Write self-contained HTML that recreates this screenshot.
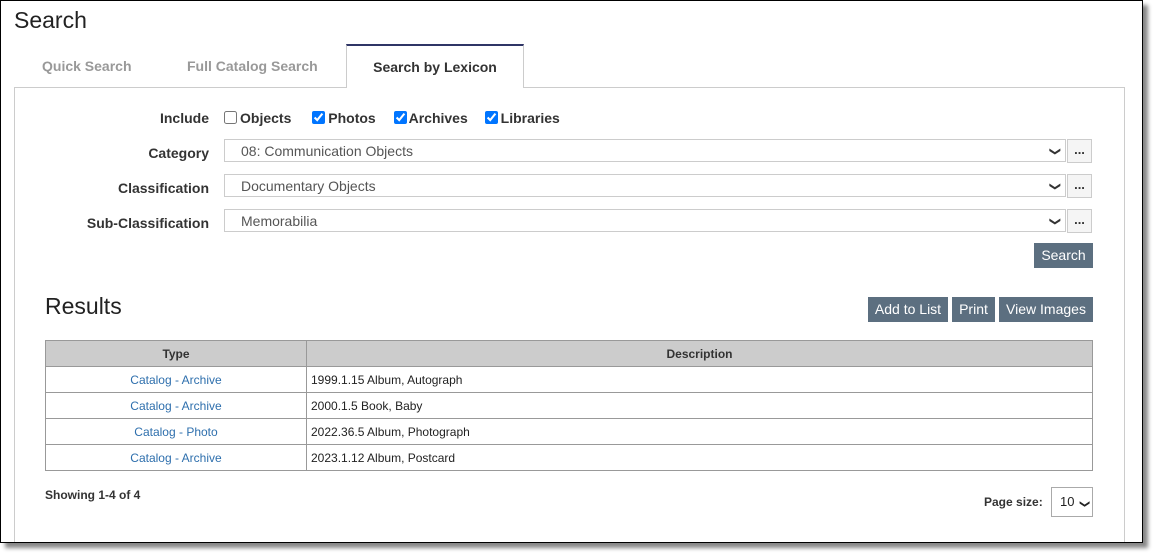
<!DOCTYPE html>
<html><head><style>
body{margin:0;width:1153px;height:558px;background:#fff;font-family:"Liberation Sans",Arial,sans-serif;position:relative;overflow:hidden}
.a{position:absolute}
.frame{left:0;top:0;width:1141px;height:541px;border:1px solid #000;box-shadow:5px 5px 4px #888;background:#fff}
.lbl{font-size:14px;font-weight:bold;color:#333;text-align:right;width:130px;left:79px}
.sel{left:224px;width:842px;height:23px;border:1px solid #ccc;font-size:14px;color:#555;line-height:23px;box-sizing:border-box;padding-left:16px}
.chev{position:absolute;right:6px;top:0;font-size:11px;color:#333;display:inline-block;transform:rotate(90deg)}
.dots{left:1067px;width:25px;height:24px;border:1px solid #ccc;background:#f5f5f5;box-sizing:border-box;font-size:13px;text-align:center;line-height:20px;color:#333;font-weight:bold}
.btn{background:#5c6f80;color:#fff;font-size:14px;height:25px;line-height:25px;text-align:center}
table{border-collapse:collapse;font-size:12px}
td,th{border:1px solid #999;height:25px;padding:0 4px}
th{background:#ccc;color:#333}
td.t{text-align:center;color:#2e6fad}
td.d{color:#222}
</style></head><body>
<div class="a frame"></div>
<div class="a" style="left:14px;top:7px;font-size:23px;color:#222">Search</div>
<div class="a" style="left:42px;top:58px;font-size:14px;font-weight:bold;color:#999">Quick Search</div>
<div class="a" style="left:187px;top:58px;font-size:14px;font-weight:bold;color:#999">Full Catalog Search</div>
<div class="a" style="left:14px;top:87px;width:1109px;height:454px;border:1px solid #ccc;border-bottom:none"></div>
<div class="a" style="left:346px;top:44px;width:178px;height:44px;border:1px solid #ccc;border-top:2px solid #2f3566;border-bottom:none;background:#fff;box-sizing:border-box;text-align:center;font-size:14px;font-weight:bold;color:#333;line-height:42px">Search by Lexicon</div>
<div class="a lbl" style="top:110px">Include</div>
<div class="a" style="left:224px;top:110px;font-size:14px;font-weight:bold;color:#333;white-space:nowrap">
<input type="checkbox" style="margin:0 3px 0 0;width:13px;height:13px;vertical-align:-1px">Objects
<input type="checkbox" checked style="margin:0 3px 0 17px;width:13px;height:13px;vertical-align:-1px">Photos
<input type="checkbox" checked style="margin:0 2px 0 14px;width:13px;height:13px;vertical-align:-1px">Archives
<input type="checkbox" checked style="margin:0 3px 0 13px;width:13px;height:13px;vertical-align:-1px">Libraries</div>
<div class="a lbl" style="top:145px">Category</div>
<div class="a sel" style="top:139px">08: Communication Objects<span class="chev">&#10095;</span></div>
<div class="a dots" style="top:139px">...</div>
<div class="a lbl" style="top:180px">Classification</div>
<div class="a sel" style="top:174px">Documentary Objects<span class="chev">&#10095;</span></div>
<div class="a dots" style="top:174px">...</div>
<div class="a lbl" style="top:215px">Sub-Classification</div>
<div class="a sel" style="top:209px">Memorabilia<span class="chev">&#10095;</span></div>
<div class="a dots" style="top:209px">...</div>
<div class="a btn" style="left:1034px;top:243px;width:59px">Search</div>
<div class="a" style="left:45px;top:293px;font-size:23px;color:#222">Results</div>
<div class="a btn" style="left:868px;top:297px;width:80px">Add to List</div>
<div class="a btn" style="left:952px;top:297px;width:43px">Print</div>
<div class="a btn" style="left:999px;top:297px;width:94px">View Images</div>
<table class="a" style="left:45px;top:340px;width:1048px">
<tr><th style="width:252px">Type</th><th>Description</th></tr>
<tr><td class="t">Catalog - Archive</td><td class="d">1999.1.15 Album, Autograph</td></tr>
<tr><td class="t">Catalog - Archive</td><td class="d">2000.1.5 Book, Baby</td></tr>
<tr><td class="t">Catalog - Photo</td><td class="d">2022.36.5 Album, Photograph</td></tr>
<tr><td class="t">Catalog - Archive</td><td class="d">2023.1.12 Album, Postcard</td></tr>
</table>
<div class="a" style="left:45px;top:488px;font-size:12px;font-weight:bold;color:#333">Showing 1-4 of 4</div>
<div class="a" style="left:984px;top:495px;font-size:12px;font-weight:bold;color:#333">Page size:</div>
<div class="a" style="left:1051px;top:487px;width:42px;height:30px;border:1px solid #aaa;box-sizing:border-box;font-size:13px;line-height:28px;padding-left:8px;color:#222">10 <span style="font-size:10px;display:inline-block;transform:rotate(90deg);margin-left:2px">&#10095;</span></div>
</body></html>
